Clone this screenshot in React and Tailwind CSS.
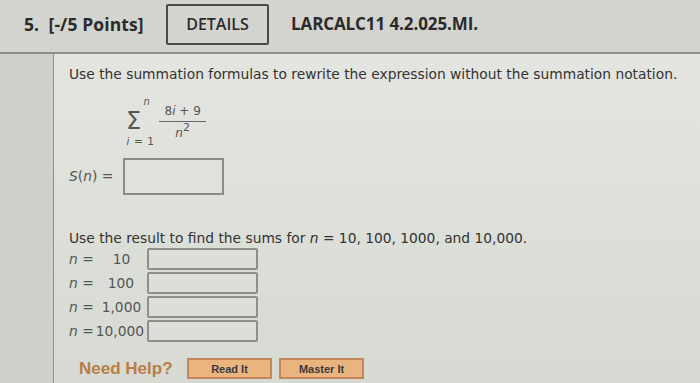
import React from "react";

const sums = [
  { label: "10", pad: "pl-[19px]" },
  { label: "100", pad: "pl-[14px]" },
  { label: "1,000", pad: "pl-[8px]" },
  { label: "10,000", pad: "pl-[2px]" },
];

const Sigma = () => (
  <div className="flex items-start gap-[4px] pl-[57px] pt-[14px] text-[#555]">
    <div className="flex flex-col items-center">
      <span className="italic text-[10px] leading-[10px] pl-[12px]">n</span>
      <span className="text-[24px] leading-[26px] pr-[14px] mt-[1px]">Σ</span>
      <span className="text-[10.5px] leading-[12px] tracking-[0.6px] mt-[1px]">
        <i>i</i> = 1
      </span>
    </div>
    <div className="flex flex-col items-center mt-[7px]">
      <span className="text-[12px] leading-[14px]">
        8<i>i</i> + 9
      </span>
      <div className="w-[47px] h-px bg-[#666] mt-[3px]" />
      <span className="text-[12px] leading-[14px] italic mt-[4px]">
        n<sup className="not-italic text-[11px] -top-[6px]">2</sup>
      </span>
    </div>
  </div>
);

export default function App() {
  return (
    <div
      className="w-[700px] h-[383px] overflow-hidden bg-[#d9dcd5] flex flex-col"
      style={{ fontFamily: "'DejaVu Sans', Verdana, sans-serif" }}
    >
      {/* question header */}
      <div className="h-[54px] shrink-0 flex items-center bg-[#d3d3cf] border-b-2 border-[#8d8d89] pl-[24px] text-[#2b2b2b]">
        <span
          className="text-[17.5px] font-bold w-[142px] -mt-[4px] tracking-[0.1px]"
          style={{ fontFamily: "'Open Sans', sans-serif" }}
        >
          5.&nbsp;&nbsp;[-/5 Points]
        </span>
        <div
          className="h-[41px] w-[103px] -mt-[4px] border-2 border-[#4a4a48] rounded-[2px] flex items-center justify-center text-[16px] font-semibold"
          style={{ fontFamily: "'Open Sans', sans-serif" }}
        >
          DETAILS
        </div>
        <span
          className="ml-[22px] -mt-[4px] text-[17px] font-bold tracking-[-0.1px]"
          style={{ fontFamily: "'Open Sans', sans-serif" }}
        >
          LARCALC11 4.2.025.MI.
        </span>
      </div>

      <div className="flex flex-1">
        <div className="w-[54px] shrink-0 bg-[#cfd0c9] border-r border-[#8e918a]" />
        <div className="flex-1 bg-gradient-to-b from-[#e4e5e0] to-[#d6dad2] pl-[15px] pt-[11px] text-[#333]">
          <p className="text-[13.8px] leading-[18px]">
            Use the summation formulas to rewrite the expression without the summation notation.
          </p>
          <Sigma />
          <div className="flex items-center mt-[11px] text-[13.8px] text-[#555]">
            <span className="w-[54px]">
              <i>S</i>(<i>n</i>) =
            </span>
            <div className="w-[101px] h-[37px] border-2 border-[#8a8a86] bg-[#dfe1dc]" />
          </div>
          <p className="text-[13.8px] leading-[18px] mt-[34px]">
            Use the result to find the sums for <i>n</i> = 10, 100, 1000, and 10,000.
          </p>
          <div className="flex flex-col gap-[2px] mt-[1px] text-[13.8px] text-[#555]">
            {sums.map((s) => (
              <div key={s.label} className="flex items-center h-[22px]">
                <span className="w-[78px] flex whitespace-nowrap">
                  <i>n</i>&nbsp;=<span className={s.pad}>{s.label}</span>
                </span>
                <div className="w-[111px] h-[22px] border-2 border-[#8e8e8a] rounded-[2px] bg-[#dcdfd9]" />
              </div>
            ))}
          </div>
          <div
            className="flex items-center mt-[14px] pl-[10px]"
            style={{ fontFamily: "'Liberation Sans', Arial, sans-serif" }}
          >
            <span className="text-[17px] font-bold text-[#b97d45] w-[108px]">Need Help?</span>
            <button className="w-[85px] h-[21px] bg-[#eab47f] border-2 border-[#c4865a] text-[11px] font-bold text-[#3a3a3a]">
              Read It
            </button>
            <button className="ml-[7px] w-[85px] h-[21px] bg-[#eab47f] border-2 border-[#c4865a] text-[11px] font-bold text-[#3a3a3a]">
              Master It
            </button>
          </div>
        </div>
      </div>
    </div>
  );
}
